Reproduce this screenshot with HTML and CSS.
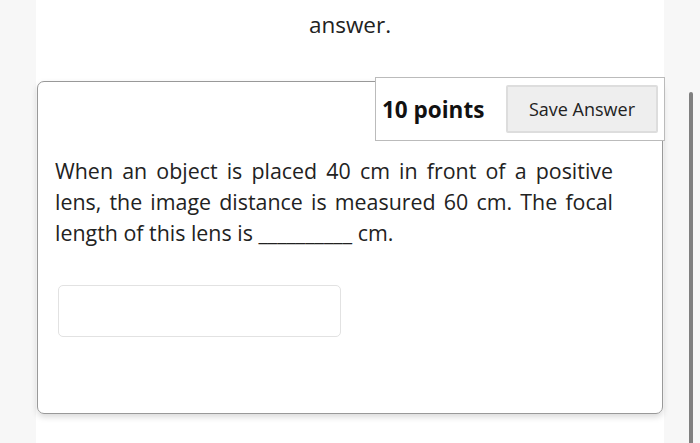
FILE: index.html
```html
<!DOCTYPE html>
<html>
<head>
<meta charset="utf-8">
<link rel="stylesheet" href="styles.css">
</head>
<body>
<div class="page">
  <p class="intro">answer.</p>
  <div class="card">
    <div class="card-header">
      <span class="points">10 points</span>
      <button class="save">Save Answer</button>
    </div>
    <p class="question">When an object is placed 40 cm in front of a positive lens, the image distance is measured 60 cm. The focal length of this lens is __________ cm.</p>
    <input class="answer" type="text">
  </div>
</div>
<div class="scrollbar"></div>
</body>
</html>
```
FILE: styles.css
```css
html, body {
  margin: 0;
  padding: 0;
  height: 100%;
  overflow: hidden;
}
body {
  background: #f7f7f7;
  font-family: "Open Sans", "Liberation Sans", sans-serif;
  color: #222;
}
.page {
  width: 628px;
  height: 443px;
  margin-left: 36px;
  background: #fff;
  display: flex;
  flex-direction: column;
}
.intro {
  margin: 10px 0 0;
  text-align: center;
  font-size: 22.5px;
  line-height: 30px;
  height: 41px;
}
.card {
  margin: 30px 1px 0 1px;
  height: 331px;
  border: 1px solid #999;
  border-radius: 7px;
  box-shadow: 0 3px 6px rgba(0,0,0,0.15);
  display: flex;
  flex-direction: column;
}
.card-header {
  align-self: flex-end;
  margin: -5px -3px 0 0;
  height: 62px;
  width: 276px;
  border: 1px solid #bbb;
  background: #fff;
  display: flex;
  align-items: center;
  justify-content: space-between;
  padding: 0 6px 0 6px;
  box-sizing: content-box;
}
.points {
  font-weight: 700;
  font-size: 22.5px;
  color: #111;
}
.save {
  width: 152px;
  height: 48px;
  background: #eee;
  border: 2px solid #ddd;
  border-radius: 2px;
  font-family: "Open Sans", "Liberation Sans", sans-serif;
  font-size: 18px;
  color: #222;
  padding: 0;
}
.question {
  margin: 14px 49px 0 17px;
  font-size: 21.4px;
  line-height: 31px;
  text-align: justify;
}
.answer {
  margin: 37px 0 0 20px;
  width: 283px;
  height: 52px;
  box-sizing: border-box;
  border: 1.5px solid #e2e2e2;
  border-radius: 5px;
  background: #fff;
}
.scrollbar {
  position: absolute;
  left: 689px;
  top: 92px;
  width: 4px;
  height: 351px;
  background: #808080;
  border-radius: 2px 2px 0 0;
}
```
